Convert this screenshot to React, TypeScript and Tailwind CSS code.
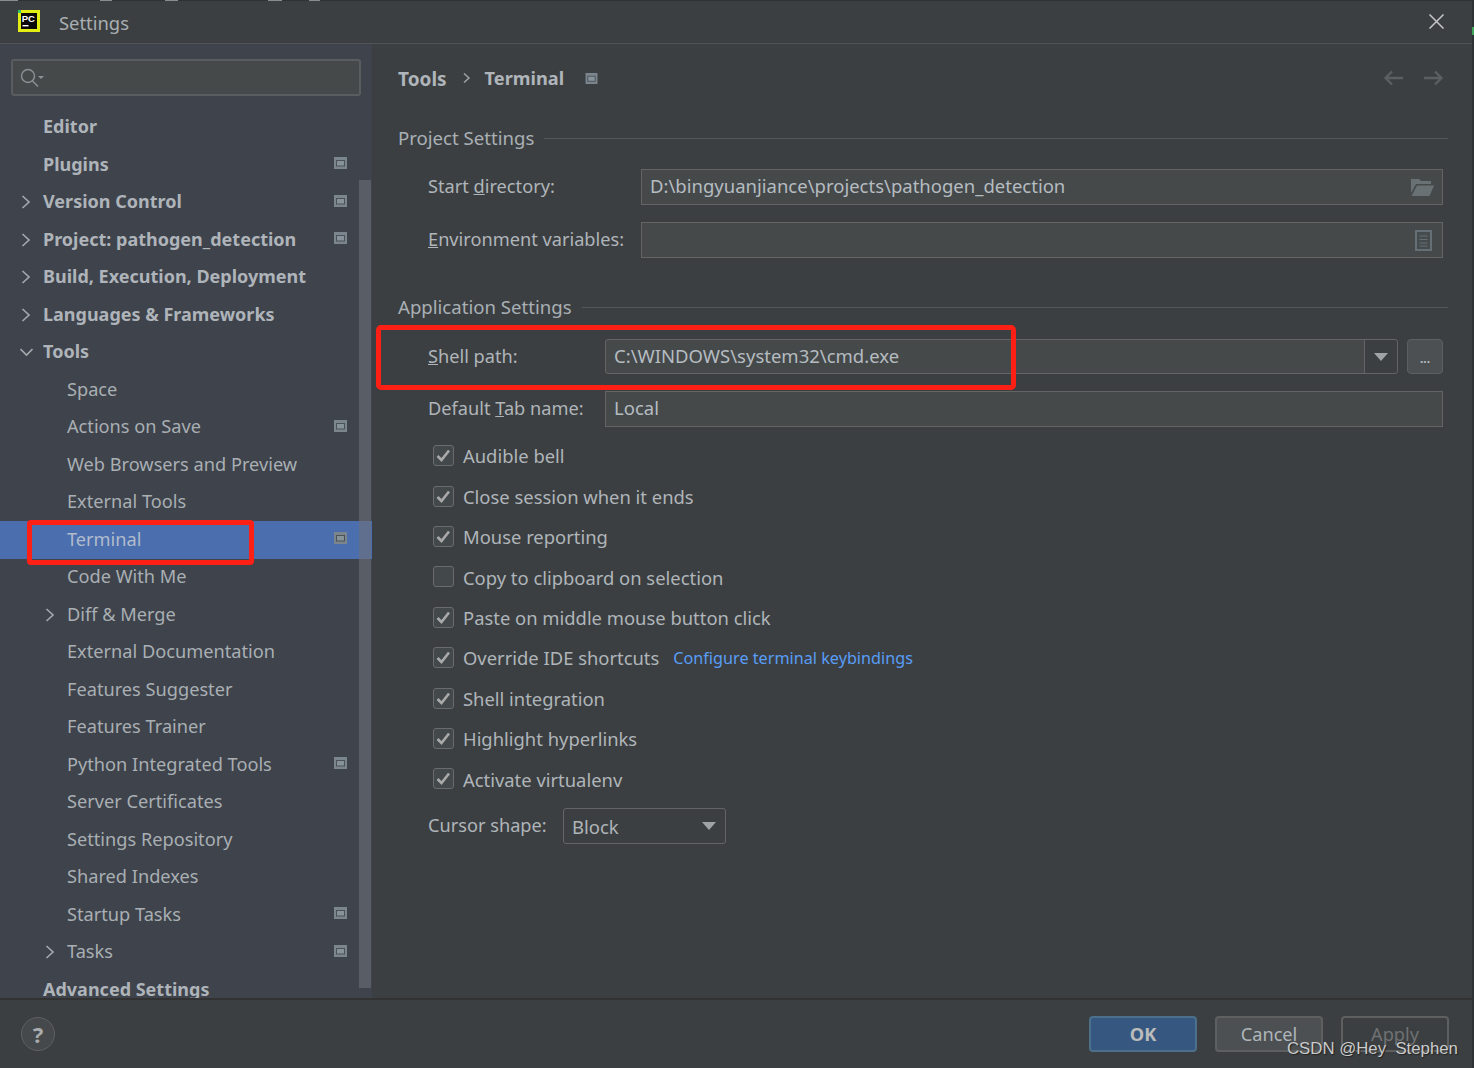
import type { ReactNode } from "react";

const tree = [
  { label: "Editor", bold: true },
  { label: "Plugins", bold: true, badge: true },
  { label: "Version Control", bold: true, arrow: "right", badge: true },
  { label: "Project: pathogen_detection", bold: true, arrow: "right", badge: true },
  { label: "Build, Execution, Deployment", bold: true, arrow: "right" },
  { label: "Languages & Frameworks", bold: true, arrow: "right" },
  { label: "Tools", bold: true, arrow: "down" },
  { label: "Space" },
  { label: "Actions on Save", badge: true },
  { label: "Web Browsers and Preview" },
  { label: "External Tools" },
  { label: "Terminal", badge: true, selected: true },
  { label: "Code With Me" },
  { label: "Diff & Merge", arrow: "right" },
  { label: "External Documentation" },
  { label: "Features Suggester" },
  { label: "Features Trainer" },
  { label: "Python Integrated Tools", badge: true },
  { label: "Server Certificates" },
  { label: "Settings Repository" },
  { label: "Shared Indexes" },
  { label: "Startup Tasks", badge: true },
  { label: "Tasks", arrow: "right", badge: true },
  { label: "Advanced Settings", bold: true },
];

const checks = [
  { label: "Audible bell", on: true },
  { label: "Close session when it ends", on: true },
  { label: "Mouse reporting", on: true },
  { label: "Copy to clipboard on selection", on: false },
  { label: "Paste on middle mouse button click", on: true },
  { label: "Override IDE shortcuts", on: true, link: "Configure terminal keybindings" },
  { label: "Shell integration", on: true },
  { label: "Highlight hyperlinks", on: true },
  { label: "Activate virtualenv", on: true },
];

const ProjectBadge = () => (
  <svg width="13" height="12" viewBox="0 0 13 12">
    <rect x="0" y="0" width="13" height="12" fill="#7b858e" />
    <rect x="2" y="3" width="9" height="6.5" fill="#4c5157" />
    <rect x="3" y="4" width="7" height="4.5" fill="#87939a" />
  </svg>
);

const Chevron = ({ down }: { down?: boolean }) => (
  <svg width="13" height="16" viewBox="0 0 13 16" fill="none" stroke="#a3a7ab" strokeWidth="1.7">
    {down ? <path d="M0.5 5 L6.5 11 L12.5 5" /> : <path d="M2.5 2 L9 8 L2.5 14" />}
  </svg>
);

const Caret = () => (
  <svg width="14" height="8" viewBox="0 0 14 8">
    <path d="M0 0 H14 L7 8 Z" fill="#a0a3a6" />
  </svg>
);

const Section = ({ title }: { title: string }) => (
  <div className="flex items-center h-[24px] pr-[26px]">
    <span className="whitespace-nowrap text-[18.6px] text-[#a9b0b5]">{title}</span>
    <div className="flex-1 h-[1px] ml-[10px] bg-[#545657]" />
  </div>
);

const Field = ({ children }: { children?: ReactNode }) => (
  <div className="flex-1 h-[36px] mr-[31px] flex items-center justify-between pl-[8px] pr-[8px] bg-[#45494a] border border-[#646464] text-[18.5px] text-[#b5bcc1]">
    {children}
  </div>
);

function Check({ on }: { on: boolean }) {
  return (
    <div className="w-[21px] h-[21px] rounded-[3px] bg-[#43494a] border border-[#6b6b6b] flex items-center justify-center">
      {on && (
        <svg width="15" height="13" viewBox="0 0 15 13" fill="none" stroke="#a9a9a9" strokeWidth="2.6">
          <path d="M1.5 7 L5.5 11 L13 1.5" />
        </svg>
      )}
    </div>
  );
}

export default function App() {
  return (
    <div className="relative w-[1474px] h-[1068px] overflow-hidden flex flex-col bg-[#3c3f41] text-[#afb5ba] text-[18.2px] font-['Noto_Sans',sans-serif]">
      {/* Title bar */}
      <div className="h-[44px] shrink-0 flex items-center border-b border-[#515354] pl-[18px] pr-[30px]">
        <svg width="22" height="22" viewBox="0 0 22 22" className="mb-[2px]">
          <rect width="22" height="22" fill="#e3ee12" />
          <rect width="3" height="3" fill="#35c46a" />
          <rect x="3" y="3" width="16" height="16" fill="#0a0a0a" />
          <text x="3.7" y="11.5" fill="#ffffff" fontSize="9.5" fontWeight="700" fontFamily="Liberation Sans, sans-serif">PC</text>
          <rect x="4.5" y="15" width="6" height="1.4" fill="#ffffff" />
        </svg>
        <span className="ml-[19px] mt-[3px] text-[18.4px] text-[#a9afb3]">Settings</span>
        <svg width="15" height="15" viewBox="0 0 15 15" className="ml-auto" stroke="#c5c7c8" strokeWidth="1.5">
          <path d="M0.5 0.5 L14.5 14.5 M14.5 0.5 L0.5 14.5" />
        </svg>
      </div>

      <div className="flex flex-1 min-h-0">
        {/* Sidebar */}
        <aside className="relative w-[372px] shrink-0 bg-[#3e434c] overflow-hidden">
          <div className="mt-[15px] ml-[11px] w-[350px] h-[37px] rounded-[3px] bg-[#45494a] border-2 border-[#5a5d5f] flex items-center pl-[7px]">
            <svg width="26" height="20" viewBox="0 0 26 20" fill="none" stroke="#8d9194" strokeWidth="1.4">
              <circle cx="8" cy="8" r="6.5" />
              <path d="M12.5 13 L18 18.5" />
              <path d="M18 8 H24 L21 11 Z" fill="#8d9194" stroke="none" />
            </svg>
          </div>
          <div className="mt-[12.5px]">
            {tree.map((item) => {
              const child = !item.bold;
              return (
                <div key={item.label} className={`h-[37.5px] flex items-center pr-[25px] ${item.selected ? "bg-[#4b6eaf]" : ""}`}>
                  <div className={`${child ? "w-[67px] pl-[44px]" : "w-[43px] pl-[20px]"} shrink-0 flex items-center`}>
                    {item.arrow && <Chevron down={item.arrow === "down"} />}
                  </div>
                  <span className={`${item.bold ? "font-bold text-[18px] text-[#aeb4b9]" : item.selected ? "text-[#b1bccb]" : "text-[#a9afb3]"} mb-[1px] whitespace-nowrap`}>{item.label}</span>
                  {item.badge && <div className="ml-auto flex mb-[3px]"><ProjectBadge /></div>}
                </div>
              );
            })}
          </div>
          <div className="absolute left-[359px] top-[136px] w-[12px] h-[808px] bg-[#6d7076]/60" />
        </aside>

        {/* Settings content */}
        <main className="flex-1 min-w-0 pl-[26px]">
          <div className="h-[68px] flex items-center pr-[31px]">
            <span className="mt-[2px] font-bold text-[19px]">Tools</span>
            <div className="ml-[15px] flex"><svg width="9" height="12" viewBox="0 0 9 12" fill="none" stroke="#a3a7ab" strokeWidth="1.4"><path d="M2 1.5 L7 6 L2 10.5" /></svg></div>
            <span className="ml-[14px] mt-[2px] font-bold">Terminal</span>
            <div className="ml-[21px] flex"><svg width="13" height="11" viewBox="0 0 13 12"><rect width="13" height="12" fill="#7b858e" /><rect x="2" y="3" width="9" height="6.5" fill="#4c5157" /><rect x="3" y="4" width="7" height="4.5" fill="#87939a" /></svg></div>
            <svg width="60" height="16" viewBox="0 0 60 16" className="ml-auto" fill="none" stroke="#5c5f61" strokeWidth="2.4">
              <path d="M20 8 H2 M9 1.5 L2.5 8 L9 14.5" />
              <path d="M41 8 H58.5 M52 1.5 L58.5 8 L52 14.5" />
            </svg>
          </div>

          <div className="mt-[14px]">
            <Section title="Project Settings" />
          </div>
          <div className="flex items-center mt-[19px] pl-[30px]">
            <span className="w-[213px]">Start <span className="underline">d</span>irectory:</span>
            <Field>
              <span className="mb-[2px]">D:\bingyuanjiance\projects\pathogen_detection</span>
              <svg width="23" height="17" viewBox="0 0 23 17" fill="#6a7175">
                <path d="M0 0 H8 L10 2 H20 V5 H5 L0 14 Z" />
                <path d="M6 6.5 H23 L18.5 17 H0.5 Z" />
              </svg>
            </Field>
          </div>
          <div className="flex items-center mt-[17px] pl-[30px]">
            <span className="w-[213px]"><span className="underline">E</span>nvironment variables:</span>
            <Field>
              <span />
              <svg width="17" height="21" viewBox="0 0 17 21" className="mr-[2px]">
                <rect width="17" height="21" fill="#657076" />
                <rect x="2" y="2" width="13" height="17" fill="#464b4d" />
                <path d="M4.5 6 H12.5 M4.5 9.5 H12.5 M4.5 13 H12.5 M4.5 16 H12.5" stroke="#657076" strokeWidth="1.2" />
              </svg>
            </Field>
          </div>

          <div className="mt-[37px]">
            <Section title="Application Settings" />
          </div>
          <div className="flex items-center mt-[20px] pl-[30px]">
            <span className="w-[177px]"><span className="underline">S</span>hell path:</span>
            <div className="flex-1 h-[35px] flex items-stretch rounded-[3px] bg-[#45494a] border border-[#646464]">
              <span className="flex-1 pl-[8px] pb-[2px] self-center text-[18.5px] text-[#b5bcc1]">C:\WINDOWS\system32\cmd.exe</span>
              <div className="w-[33px] bg-[#3c3f41] rounded-r-[3px] border-l border-[#646464] flex items-center justify-center"><Caret /></div>
            </div>
            <div className="ml-[9px] mr-[31px] w-[36px] h-[35px] rounded-[4px] bg-[#4c5052] border border-[#5e6060] flex items-end justify-center pb-[8px] text-[12px] leading-none font-bold text-[#b5bcc1]">...</div>
          </div>
          <div className="flex items-center mt-[17px] pl-[30px]">
            <span className="w-[177px]">Default <span className="underline">T</span>ab name:</span>
            <Field>
              <span className="mb-[2px]">Local</span>
            </Field>
          </div>

          <div className="mt-[8.6px] pl-[35px]">
            {checks.map((c) => (
              <div key={c.label} className="h-[40.4px] flex items-center">
                <Check on={c.on} />
                <span className="ml-[9px] mt-[1px] text-[18.4px]">{c.label}</span>
                {c.link && <span className="ml-[14px] text-[16.2px] text-[#589df6]">{c.link}</span>}
              </div>
            ))}
          </div>

          <div className="flex items-center mt-[8.4px] pl-[30px]">
            <span className="w-[135px]">Cursor shape:</span>
            <div className="w-[163px] h-[36px] rounded-[3px] border border-[#646464] flex items-center justify-between pl-[8px] pr-[9px]">
              <span className="mt-[2px] text-[18.5px]">Block</span>
              <Caret />
            </div>
          </div>
        </main>
      </div>

      {/* Footer */}
      <div className="h-[70px] shrink-0 border-t-2 border-[#323232] flex items-center pl-[21px] pr-[25px]">
        <div className="w-[34px] h-[34px] rounded-full bg-[#46494b] border border-[#5e6060] flex items-center justify-center text-[22px] font-bold text-[#a9acae]">?</div>
        <div className="ml-auto w-[108px] h-[36px] pt-[2px] rounded-[4px] bg-[#365880] border-2 border-[#4c708c] flex items-center justify-center font-bold text-[#bbbbbb]">OK</div>
        <div className="ml-[18px] w-[108px] h-[36px] pt-[2px] rounded-[4px] bg-[#4c5052] border-2 border-[#5e6060] flex items-center justify-center">Cancel</div>
        <div className="ml-[18px] w-[108px] h-[36px] pt-[2px] rounded-[4px] border-2 border-[#5e6060] flex items-center justify-center text-[#6f7173]">Apply</div>
      </div>

      {/* Desktop showing behind the window */}
      <div className="absolute left-0 top-0 h-[1px] w-full bg-[#2f3234]" />
      <div className="absolute left-0 top-0 h-[1px] w-[18px] bg-[#8a8c8d]" />
      <div className="absolute left-[100px] top-0 h-[1px] w-[12px] bg-[#8a8c8d]" />
      <div className="absolute left-[165px] top-0 h-[1px] w-[13px] bg-[#8a8c8d]" />
      <div className="absolute left-[268px] top-0 h-[1px] w-[14px] bg-[#8a8c8d]" />
      <div className="absolute left-[309px] top-0 h-[1px] w-[11px] bg-[#8a8c8d]" />
      <div className="absolute right-0 top-0 h-full w-[2px] bg-[#2f3234]" />
      <div className="absolute right-0 top-[27px] h-[8px] w-[2px] bg-[#3fa35a]" />

      {/* Red annotation boxes */}
      <div className="absolute left-[27px] top-[520px] w-[227px] h-[45px] rounded-[4px] border-[5px] border-[#fe2015]" />
      <div className="absolute left-[376px] top-[325px] w-[640px] h-[65px] rounded-[5px] border-[5px] border-[#fe2015]" />

      {/* Watermark */}
      <div className="absolute left-[1287px] top-[1036px] whitespace-pre text-[16.8px] text-[#c9cbcc] font-['Liberation_Sans',sans-serif] [text-shadow:1px_1px_1px_#222]">CSDN @Hey  Stephen</div>
    </div>
  );
}
